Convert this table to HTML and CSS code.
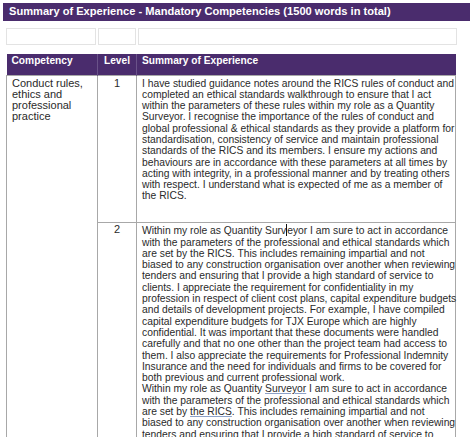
FILE: index.html
```html
<!DOCTYPE html>
<html lang="en">
<head>
<meta charset="utf-8">
<title>Summary of Experience</title>
<link rel="stylesheet" href="styles.css">
</head>
<body>
<div class="page">
  <div class="title-bar">Summary of Experience - Mandatory Competencies (1500 words in total)</div>
  <div class="blank-row">
    <div class="blank blank-comp"></div>
    <div class="blank blank-level"></div>
    <div class="blank blank-summary"></div>
  </div>
  <table class="comp-table">
    <colgroup>
      <col class="col-comp">
      <col class="col-level">
      <col class="col-summary">
    </colgroup>
    <thead>
      <tr>
        <th class="th-comp">Competency</th>
        <th class="th-level">Level</th>
        <th class="th-summary">Summary of Experience</th>
      </tr>
    </thead>
    <tbody>
      <tr>
        <td class="comp" rowspan="2">
          <span class="ln">Conduct rules,</span>
          <span class="ln">ethics and</span>
          <span class="ln">professional</span>
          <span class="ln">practice</span>
        </td>
        <td class="level">1</td>
        <td class="summary summary-first">
          <span class="ln">I have studied guidance notes around the RICS rules of conduct and</span>
          <span class="ln">completed an ethical standards walkthrough to ensure that I act</span>
          <span class="ln">within the parameters of these rules within my role as a Quantity</span>
          <span class="ln">Surveyor. I recognise the importance of the rules of conduct and</span>
          <span class="ln">global professional &amp; ethical standards as they provide a platform for</span>
          <span class="ln">standardisation, consistency of service and maintain professional</span>
          <span class="ln">standards of the RICS and its members. I ensure my actions and</span>
          <span class="ln">behaviours are in accordance with these parameters at all times by</span>
          <span class="ln">acting with integrity, in a professional manner and by treating others</span>
          <span class="ln">with respect. I understand what is expected of me as a member of</span>
          <span class="ln">the RICS.</span>
        </td>
      </tr>
      <tr>
        <td class="level">2</td>
        <td class="summary">
          <span class="ln">Within my role as Quantity Surv<span class="caret"></span>eyor I am sure to act in accordance</span>
          <span class="ln">with the parameters of the professional and ethical standards which</span>
          <span class="ln">are set by the RICS. This includes remaining impartial and not</span>
          <span class="ln">biased to any construction organisation over another when reviewing</span>
          <span class="ln">tenders and ensuring that I provide a high standard of service to</span>
          <span class="ln">clients. I appreciate the requirement for confidentiality in my</span>
          <span class="ln">profession in respect of client cost plans, capital expenditure budgets</span>
          <span class="ln">and details of development projects. For example, I have compiled</span>
          <span class="ln">capital expenditure budgets for TJX Europe which are highly</span>
          <span class="ln">confidential. It was important that these documents were handled</span>
          <span class="ln">carefully and that no one other than the project team had access to</span>
          <span class="ln">them. I also appreciate the requirements for Professional Indemnity</span>
          <span class="ln">Insurance and the need for individuals and firms to be covered for</span>
          <span class="ln">both previous and current professional work.</span>
          <span class="ln">Within my role as Quantity <span class="spell">Surveyor</span> I am sure to act in accordance</span>
          <span class="ln">with the parameters of the professional and ethical standards which</span>
          <span class="ln">are set by <span class="spell">the RICS</span>. This includes remaining impartial and not</span>
          <span class="ln">biased to any construction organisation over another when reviewing</span>
          <span class="ln">tenders and ensuring that I provide a high standard of service to</span>
        </td>
      </tr>
    </tbody>
  </table>
</div>
</body>
</html>
```

FILE: styles.css
```css
html, body {
  margin: 0;
  padding: 0;
  background: #ffffff;
  overflow: hidden;
}

body {
  font-family: "Liberation Sans", Arial, sans-serif;
  color: #2a2a2a;
  width: 474px;
  height: 437px;
}

.page {
  padding: 3px 4px 0 3px;
}

.title-bar {
  width: 461px;
  height: 18px;
  background: #4a2c6d;
  color: #ffffff;
  font-weight: bold;
  font-size: 11.1px;
  line-height: 17px;
  padding-left: 6px;
  white-space: nowrap;
}

.blank-row {
  display: flex;
  gap: 2px;
  margin: 7px 0 0 3px;
  height: 17px;
}

.blank {
  box-sizing: border-box;
  height: 17px;
  border: 1px solid #e3e3e3;
  background: #ffffff;
}

.blank-comp { width: 90px; }
.blank-level { width: 38px; }
.blank-summary { width: 319px; }

.comp-table {
  margin: 9px 0 0 3px;
  border-collapse: collapse;
  table-layout: fixed;
  width: 449px;
}

.col-comp { width: 91px; }
.col-level { width: 39px; }
.col-summary { width: 319px; }

.comp-table th {
  background: #4a2c6d;
  color: #ffffff;
  font-weight: bold;
  font-size: 10.2px;
  line-height: 12px;
  height: 21px;
  box-sizing: border-box;
  padding: 1px 5px 8px;
  text-align: left;
  vertical-align: top;
  border-left: 1px solid #6a5289;
  white-space: nowrap;
}

.comp-table th.th-comp { border-left: none; }
.comp-table th.th-level { text-align: center; padding-left: 0; padding-right: 0; }

.comp-table td {
  border: 1px solid #a8a8a8;
  vertical-align: top;
  font-size: 11px;
  line-height: 11.3px;
  padding: 1.5px 5px 2px;
}

.comp-table td.comp { padding-left: 5px; }
.comp-table td.level { text-align: center; padding-left: 0; padding-right: 0; }
.comp-table td.summary {
  font-size: 10.3px;
  padding-left: 5px;
  padding-right: 0;
}

.comp-table td.summary-first { padding-bottom: 20px; }

.ln {
  display: block;
  white-space: nowrap;
}

.caret {
  display: inline-block;
  width: 0;
  height: 12px;
  border-left: 1px solid #111111;
  vertical-align: -2px;
}

.spell {
  text-decoration: underline;
  text-decoration-color: #8da2c8;
  text-underline-offset: 1px;
}
```
